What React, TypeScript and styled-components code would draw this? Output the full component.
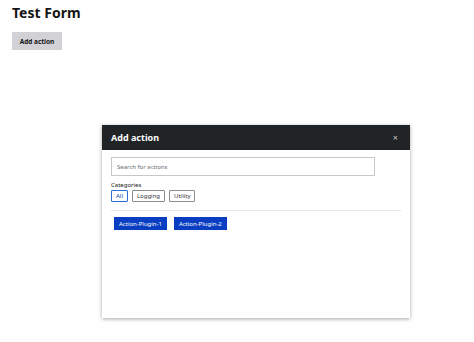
import styled, { createGlobalStyle } from 'styled-components';

const GlobalStyle = createGlobalStyle`
  html, body {
    margin: 0;
    padding: 0;
    background: #ffffff;
    font-family: 'Noto Sans', 'Open Sans', sans-serif;
    color: #151515;
  }
`;

const categories = ['All', 'Logging', 'Utility'];
const plugins = ['Action-Plugin-1', 'Action-Plugin-2'];

export default function App() {
  return (
    <>
      <GlobalStyle />
      <Page>
        <Title>Test Form</Title>
        <AddButton>Add action</AddButton>
      </Page>
      <Modal>
        <ModalHeader>
          <ModalTitle>Add action</ModalTitle>
          <CloseButton>×</CloseButton>
        </ModalHeader>
        <ModalBody>
          <SearchInput placeholder="Search for actions" />
          <Label>Categories</Label>
          <CategoryRow>
            {categories.map((c, i) => (
              <CategoryChip key={c} $active={i === 0}>
                {c}
              </CategoryChip>
            ))}
          </CategoryRow>
          <Divider />
          <PluginRow>
            {plugins.map((p) => (
              <PluginButton key={p}>{p}</PluginButton>
            ))}
          </PluginRow>
        </ModalBody>
      </Modal>
    </>
  );
}

const Page = styled.div`
  display: flex;
  flex-direction: column;
  align-items: flex-start;
  padding: 4px 12px;
`;

const Title = styled.h1`
  margin: 0 0 10px;
  font-size: 14px;
  font-weight: 700;
  line-height: 18px;
`;

const AddButton = styled.button`
  width: 50px;
  height: 18px;
  padding: 0;
  border: none;
  background: #d2d2d6;
  font-family: inherit;
  font-size: 6.5px;
  font-weight: 700;
  color: #151515;
`;

const Modal = styled.div`
  position: absolute;
  left: 102px;
  top: 125px;
  width: 308px;
  height: 193px;
  background: #ffffff;
  box-shadow: 0 1px 4px rgba(0, 0, 0, 0.35);
  display: flex;
  flex-direction: column;
`;

const ModalHeader = styled.div`
  height: 25px;
  background: #212427;
  display: flex;
  align-items: center;
  justify-content: space-between;
  padding: 0 12px 0 9px;
`;

const ModalTitle = styled.span`
  color: #ffffff;
  font-size: 9px;
  font-weight: 700;
`;

const CloseButton = styled.span`
  color: #c4c4c4;
  font-size: 9px;
  line-height: 1;
`;

const ModalBody = styled.div`
  display: flex;
  flex-direction: column;
  align-items: flex-start;
  padding: 7px 9px;
`;

const SearchInput = styled.input`
  box-sizing: border-box;
  width: 264px;
  height: 19px;
  padding: 0 5px;
  border: 1px solid #c8c8c8;
  font-family: inherit;
  font-size: 6px;
  outline: none;
  &::placeholder {
    color: #6a6e73;
  }
`;

const Label = styled.div`
  margin-top: 5px;
  font-size: 6px;
  line-height: 8px;
  color: #151515;
`;

const CategoryRow = styled.div`
  display: flex;
  gap: 4px;
  margin-top: 1px;
`;

const CategoryChip = styled.span<{ $active?: boolean }>`
  box-sizing: border-box;
  height: 12px;
  padding: 0 4px;
  display: flex;
  align-items: center;
  border: 1px solid ${({ $active }) => ($active ? '#2b6cd6' : '#8a8d90')};
  border-radius: 1px;
  font-size: 6px;
  color: ${({ $active }) => ($active ? '#0b3fb0' : '#333')};
`;

const Divider = styled.hr`
  align-self: stretch;
  margin: 8px 0 0 0;
  border: none;
  border-top: 1px solid #e6e6e6;
`;

const PluginRow = styled.div`
  display: flex;
  gap: 7px;
  margin: 6px 0 0 3px;
`;

const PluginButton = styled.button`
  height: 13px;
  padding: 0 5px;
  border: none;
  background: #0a3ec2;
  color: #ffffff;
  font-family: inherit;
  font-size: 6px;
`;
